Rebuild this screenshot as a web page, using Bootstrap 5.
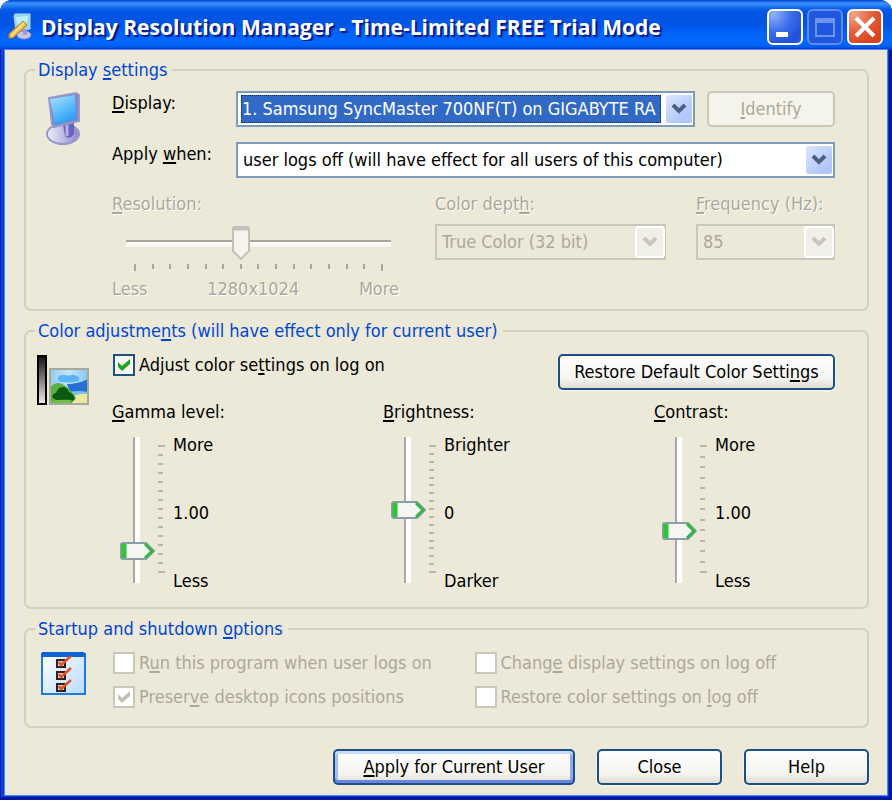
<!DOCTYPE html>
<html lang="en">
<head>
<meta charset="utf-8">
<meta name="viewport" content="width=device-width, initial-scale=1">
<title>Display Resolution Manager</title>
<link href="https://cdn.jsdelivr.net/npm/bootstrap@5.3.0/dist/css/bootstrap.min.css" rel="stylesheet">
<style>
:root { --face:#ece9d8; --off:#aca899; --edge:#7f9db9; }
body { font:18px/24px "DejaVu Sans Condensed","Noto Sans",sans-serif; color:#000; background:#fff; }
u { text-underline-offset:2px; text-decoration-thickness:2px; text-decoration-skip-ink:none; }
.xp-window { background:#0018a0; border-radius:12px 12px 0 0; overflow:hidden; }
.xp-title { height:50px; padding:4px 9px 0 8px; color:#fff;
  background:linear-gradient(#0848c8 0,#0a55dc 1px,#3c92fb 3px,#2c86fa 5px,#0a5ee8 9px,#0054e3 14px,#0055e5 24px,#0262f8 34px,#0268fe 42px,#0260f4 46px,#0148c4 49px,#0140b8 50px); }
.xp-title h1 { font:bold 21px/28px "Open Sans","Noto Sans",sans-serif; text-shadow:2px 2px 1px #0a1883; white-space:nowrap; overflow:hidden; }
.cap { width:36px; height:36px; padding:0; border:2px solid #fff; border-radius:6px; background:radial-gradient(circle at 15% 10%,#8fb0fa,#3a6ceb 45%,#1f50d8 80%,#2a62ee); }
.cap svg { display:block; width:32px; height:32px; }
.cap-off { border-color:#5f8bf0; background:#1d58de; }
.cap-close { background:radial-gradient(circle at 15% 10%,#f2a48c,#e3603c 45%,#d8431a 80%,#d04818); }
.xp-body { background:var(--face); margin:0 5px 5px; padding:8px 18px 10px 19px; box-shadow:0 0 0 1px #4a88f6,0 0 0 2px #0a3ad6,-2px 0 0 2px #0a46e0; }
.grp { border:2px solid #d3d1be; border-radius:7px; padding:9px 32px 0 9px; min-width:0; }
.grp legend { float:none; width:auto; margin:0; padding:0 5px 0 3px; font-size:18px; line-height:24px; color:#0046d5; }
.pic { width:77px; flex:none; }
.pic svg { display:block; }
.lead-label { width:124px; flex:none; }
.combo { height:36px; border:2px solid var(--edge); background:#fff; padding:2px 1px 2px 2px; min-width:0; }
.combo select { appearance:none; -webkit-appearance:none; border:0; background:transparent; font:inherit; color:inherit; padding:0 0 0 3px; min-width:0; line-height:24px; outline:0; opacity:1; border-radius:0; }
.combo .picked { background:#316ac5; color:#fff; margin:0 5px 0 1px; padding:0; border:1px dotted #e8b070; outline:1px dotted #1d2630; outline-offset:-1px; }
.drop { width:26px; flex:none; border-radius:2px; background:linear-gradient(135deg,#dce6fe,#b4c9fa 70%,#aec4f6); display:grid; place-items:center; }
.combo-off { border-color:#c9c7ba; background:var(--face); color:var(--off); }
.combo-off .drop { background:#f1f0e8; box-shadow:0 0 0 2px #fff; }
.xp-btn { --bs-btn-border-radius:5px; font:inherit; height:36px; padding:0 8px; border:2px solid #1c4f85; background:linear-gradient(#fff,#f5f4f0 70%,#dfdcd2); color:#000; white-space:nowrap; box-shadow:0 1px 0 1px #f3f1e6; }
.xp-btn:hover { color:#000; }
.xp-btn.main { box-shadow:inset 0 3px 0 #c6dcfd,inset 0 -3px 0 #6686e0,inset 3px 0 0 #a3bdf4,inset -3px 0 0 #8dabee; }
.xp-btn:disabled { border-color:#c9c7ba; background:#f5f4ea; color:var(--off); opacity:1; box-shadow:none; }
.etched { color:var(--off); text-shadow:1px 1px 0 #fff; }
.w-id { width:128px; } .w-wide { width:277px; } .w-apply { width:242px; } .w-small { width:125px; } .foot { gap:22px; }
.row-gap-a { margin-bottom:15px; } .row-gap-b { margin-bottom:14px; } .row-gap-c { margin-bottom:10px; }
.w-res { flex:287 1 0; } .w-depth { flex:231 1 0; margin:0 30px 0 36px; } .w-freq { flex:139 1 0; min-width:0; }
.over { display:block; margin-bottom:8px; }
.rail { padding:2px 8px 0 14px; }
.xrange { appearance:none; -webkit-appearance:none; display:block; margin:0; background:transparent; }
.xrange-h { width:100%; height:34px; }
.xrange-h::-webkit-slider-runnable-track { height:34px; background:linear-gradient(#a9a79b,#a9a79b) 0 14px/100% 2px no-repeat,linear-gradient(#fff,#f6f5ef) 0 16px/100% 5px no-repeat; }
.xrange-h::-webkit-slider-thumb { -webkit-appearance:none; width:18px; height:34px; background:url("data:image/svg+xml,%3Csvg xmlns='http://www.w3.org/2000/svg' width='18' height='34'%3E%3Cpath d='M1 2Q1 1 3 1H15Q17 1 17 2V25L9 33L1 25Z' fill='%23f4f3ee' stroke='%23c3c1b6' stroke-width='2'/%3E%3Cpath d='M2 3H16' stroke='%23c3c1b6' stroke-width='3'/%3E%3C/svg%3E"); }
.xrange-v { width:36px; height:146px; writing-mode:vertical-lr; direction:rtl; }
.xrange-v::-webkit-slider-runnable-track { width:36px; height:146px; background:linear-gradient(#a8a8a4,#a8a8a4) 13px 0/2px 100% no-repeat,linear-gradient(#fff,#fff) 15px 0/5px 100% no-repeat; }
.xrange-v::-webkit-slider-thumb { -webkit-appearance:none; width:36px; height:18px; background:url("data:image/svg+xml,%3Csvg xmlns='http://www.w3.org/2000/svg' width='36' height='18'%3E%3Cpath d='M3 1H26L34 9L26 17H3Q1 17 1 15V3Q1 1 3 1Z' fill='%23f5f5f1' stroke='%238b9ea8' stroke-width='2'/%3E%3Cpath d='M4 2V16' stroke='%2332c13c' stroke-width='5'/%3E%3Cpath d='M25 2L32 9L25 16' fill='none' stroke='%2334b548' stroke-width='3'/%3E%3C/svg%3E"); }
.tick-col { width:7px; height:128px; margin:8px 8px 0 2px; }
.tick-col i { width:5px; height:2px; background:#b9b6a6; }
.tick-col i:first-child, .tick-col i:last-child { width:7px; }
.tick-row { height:7px; margin:4px 8px 6px; }
.tick-row i { width:2px; height:5px; background:#aca899; }
.tick-row i:first-child, .tick-row i:last-child { height:7px; }
.scale { height:169px; padding-top:9px; }
.w-col { flex:271 1 0; } .w-end { flex:181 1 0; }
.xcheck { min-height:0; margin:0; padding:0; line-height:24px; height:22px; }
.checks { gap:12px; }
.xcheck .form-check-input { float:none; flex:none; margin:0 4px 0 1px; width:22px; height:22px; border:2px solid #1c5180; border-radius:0; background-color:#fff; background-size:18px 18px; }
.xcheck .form-check-input:checked { background-color:#f6f6f2; background-image:url("data:image/svg+xml,%3Csvg xmlns='http://www.w3.org/2000/svg' viewBox='0 0 18 18'%3E%3Cpath d='M3 6L7 10L15 3V8L7 15L3 11Z' fill='%2321a121'/%3E%3C/svg%3E"); }
.xcheck .form-check-input:disabled { border-color:#c9c7ba; opacity:1; background-color:#fff; }
.xcheck .form-check-input:disabled:checked { background-image:url("data:image/svg+xml,%3Csvg xmlns='http://www.w3.org/2000/svg' viewBox='0 0 18 18'%3E%3Cpath d='M3 6L7 10L15 3V8L7 15L3 11Z' fill='%23c3c1b5'/%3E%3C/svg%3E"); }
.xcheck .form-check-input:disabled ~ .form-check-label { color:var(--off); opacity:1; }
.h-one { padding-bottom:8px; } .h-two { padding-top:11px; padding-bottom:14px; } .h-three { padding-top:11px; padding-bottom:18px; }
</style>
<script src="https://cdn.jsdelivr.net/npm/bootstrap@5.3.0/dist/js/bootstrap.bundle.min.js"></script>
</head>
<body>
<main class="xp-window min-vh-100 d-flex flex-column">
  <header class="xp-title d-flex align-items-center">
    <svg class="flex-shrink-0 me-2" width="25" height="28" viewBox="0 0 25 28" aria-hidden="true">
      <path d="M6 3L7 1L22 1L22 16L8 18Z" fill="#8fd8f4" stroke="#c2d4e8"/>
      <path d="M8 4L20 3L19 10L9 12Z" fill="#b9efff"/>
      <ellipse cx="16" cy="22" rx="7" ry="4" fill="#c9c8e4" stroke="#8f8fc4"/>
      <path d="M15 16h4v6h-4z" fill="#9d9dd4"/>
      <path d="M1 21L15 8L19 12L5 25L1 25Z" fill="#f0b848" stroke="#b47a1c"/>
      <path d="M3 23L16 10" stroke="#ffe08c" stroke-width="2"/>
    </svg>
    <h1 class="m-0 flex-grow-1">Display Resolution Manager - Time-Limited FREE Trial Mode</h1>
    <div class="d-flex gap-1 flex-shrink-0">
      <button class="cap" type="button" aria-label="Minimize"><svg viewBox="0 0 32 32"><path d="M7 21h12v5H7z" fill="#fff"/></svg></button>
      <button class="cap cap-off" type="button" aria-label="Maximize" disabled><svg viewBox="0 0 32 32"><path d="M7 9h18v16H7z" fill="none" stroke="#6c93f0" stroke-width="2"/><path d="M6 7h20v5H6z" fill="#6c93f0"/></svg></button>
      <button class="cap cap-close" type="button" aria-label="Close window"><svg viewBox="0 0 32 32"><path d="M7 7L25 25M25 7L7 25" stroke="#fff" stroke-width="4"/></svg></button>
    </div>
  </header>

  <form class="xp-body flex-grow-1 d-flex flex-column gap-2">
    <fieldset class="grp h-one">
      <legend>Display <u>s</u>ettings</legend>
      <div class="d-flex">
        <div class="pic ps-2">
          <svg width="42" height="56" viewBox="0 0 42 56" aria-hidden="true">
            <defs><linearGradient id="scr" x1="0" y1="0" x2="0.500" y2="1"><stop offset="0" stop-color="#a8e8ff"/><stop offset="1" stop-color="#2a9cf4"/></linearGradient>
            <linearGradient id="foot" x1="0" x2="1"><stop offset="0" stop-color="#f0effa"/><stop offset="1" stop-color="#8c88cc"/></linearGradient></defs>
            <ellipse cx="20" cy="43" rx="16" ry="10" fill="url(#foot)" stroke="#9a98c8" stroke-width="2"/>
            <path d="M20 34L31 30V43Q27 49 22 45Z" fill="#6a62c0"/>
            <path d="M24 34v11" stroke="#b4b0e4" stroke-width="3"/>
            <path d="M6 7L33 2L36 4V30L11 36L9 33Z" fill="#7d86cc" stroke="#9a98c8" stroke-width="2"/>
            <path d="M7 8L32 4L33 28L12 34Z" fill="url(#scr)"/>
          </svg>
        </div>
        <div class="flex-grow-1">
          <div class="d-flex row-gap-a">
            <label class="lead-label" for="display"><u>D</u>isplay:</label>
            <div class="combo d-flex flex-grow-1 me-2">
              <select id="display" class="picked flex-grow-1 w-100"><option>1. Samsung SyncMaster 700NF(T) on GIGABYTE RA</option></select>
              <span class="drop"><svg width="16" height="12" viewBox="0 0 16 12"><path d="M2 2L8 8L14 2" fill="none" stroke="#4d6185" stroke-width="4"/></svg></span>
            </div>
            <button class="btn xp-btn w-id flex-shrink-0 ms-1" type="button" disabled><u>I</u>dentify</button>
          </div>
          <div class="d-flex row-gap-b">
            <label class="lead-label" for="when">Apply <u>w</u>hen:</label>
            <div class="combo d-flex flex-grow-1">
              <select id="when" class="flex-grow-1 w-100"><option>user logs off (will have effect for all users of this computer)</option></select>
              <span class="drop"><svg width="16" height="12" viewBox="0 0 16 12"><path d="M2 2L8 8L14 2" fill="none" stroke="#4d6185" stroke-width="4"/></svg></span>
            </div>
          </div>
          <div class="d-flex">
            <div class="w-res">
              <label class="etched over" for="res"><u>R</u>esolution:</label>
              <div class="rail">
                <input id="res" class="xrange xrange-h" type="range" min="0" max="14" value="6" disabled>
                <div class="tick-row d-flex justify-content-between"><i></i><i></i><i></i><i></i><i></i><i></i><i></i><i></i><i></i><i></i><i></i><i></i><i></i><i></i><i></i></div>
              </div>
              <div class="etched d-flex justify-content-between"><span>Less</span><span>1280x1024</span><span>More</span></div>
            </div>
            <div class="w-depth">
              <label class="etched over" for="depth">Color dept<u>h</u>:</label>
              <div class="combo combo-off d-flex">
                <select id="depth" class="flex-grow-1 w-100" disabled><option>True Color (32 bit)</option></select>
                <span class="drop"><svg width="16" height="12" viewBox="0 0 16 12"><path d="M2 2L8 8L14 2" fill="none" stroke="#c9c7ba" stroke-width="4"/></svg></span>
              </div>
            </div>
            <div class="w-freq">
              <label class="etched over text-nowrap" for="freq"><u>F</u>requency (Hz):</label>
              <div class="combo combo-off d-flex">
                <select id="freq" class="flex-grow-1 w-100" disabled><option>85</option></select>
                <span class="drop"><svg width="16" height="12" viewBox="0 0 16 12"><path d="M2 2L8 8L14 2" fill="none" stroke="#c9c7ba" stroke-width="4"/></svg></span>
              </div>
            </div>
          </div>
        </div>
      </div>
    </fieldset>

    <fieldset class="grp h-two">
      <legend>Color adjustme<u>n</u>ts (will have effect only for current user)</legend>
      <div class="d-flex">
        <div class="pic">
          <svg width="56" height="54" viewBox="0 0 56 54" aria-hidden="true">
            <defs><linearGradient id="ramp" x1="0" y1="0" x2="0" y2="1"><stop offset="0" stop-color="#111"/><stop offset="1" stop-color="#eee"/></linearGradient>
            <linearGradient id="sky" x1="0" x2="1"><stop offset="0" stop-color="#8ecbf8"/><stop offset="0.500" stop-color="#c4e6fb"/><stop offset="1" stop-color="#8cc4f0"/></linearGradient>
            <clipPath id="frame"><path d="M16 16h36v34H16z"/></clipPath></defs>
            <path d="M3 2h8v48H3z" fill="url(#ramp)" stroke="#000" stroke-width="2"/>
            <g clip-path="url(#frame)">
              <path d="M15 15h38v36H15z" fill="url(#sky)"/>
              <path d="M23 23q3-3 7-2t6 0t8 2v4q-12 3-21 0z" fill="#5cb4f4"/>
              <path d="M32 30Q44 30 53 25V42H36Z" fill="#2470d4"/>
              <path d="M34 38Q44 36 53 38V42H36Z" fill="#7cc0ec"/>
              <path d="M36 44q6-5 17-4v12H33z" fill="#ece8a0"/>
              <path d="M15 34q5-7 12-4t14 14l-6 7H15z" fill="#58b040"/>
              <path d="M17 43q1-4 4-4q2-6 7-6q4 0 6 5q4 1 6 7q-2 3-10 3t-13-5" fill="#0c5a10"/>
              <path d="M15 47q12-2 22-1l-4 5H15z" fill="#6cc048"/>
            </g>
            <path d="M15 15h38v35H15z" fill="none" stroke="#a9a99a" stroke-width="2"/>
          </svg>
        </div>
        <div class="flex-grow-1">
          <div class="d-flex justify-content-between align-items-start row-gap-c">
            <div class="form-check xcheck d-flex align-items-center">
              <input id="adjust" class="form-check-input" type="checkbox" checked>
              <label class="form-check-label" for="adjust">Adjust color se<u>t</u>tings on log on</label>
            </div>
            <button class="btn xp-btn w-wide" type="button" id="restore">Restore Default Color Setti<u>n</u>gs</button>
          </div>
          <div class="d-flex">
            <div class="w-col">
              <label for="gamma"><u>G</u>amma level:</label>
              <div class="scale d-flex ps-2">
                <div class="pt-1 d-flex"><input id="gamma" class="xrange xrange-v" type="range" min="0" max="100" value="18">
                <div class="tick-col d-flex flex-column justify-content-between"><i></i><i></i><i></i><i></i><i></i><i></i><i></i><i></i><i></i><i></i><i></i><i></i><i></i><i></i><i></i></div></div>
                <div class="d-flex flex-column justify-content-between"><span>More</span><span>1.00</span><span>Less</span></div>
              </div>
            </div>
            <div class="w-col">
              <label for="bright"><u>B</u>rightness:</label>
              <div class="scale d-flex ps-2">
                <div class="pt-1 d-flex"><input id="bright" class="xrange xrange-v" type="range" min="0" max="100" value="50">
                <div class="tick-col d-flex flex-column justify-content-between"><i></i><i></i><i></i><i></i><i></i><i></i><i></i><i></i><i></i><i></i><i></i><i></i><i></i><i></i><i></i><i></i><i></i></div></div>
                <div class="d-flex flex-column justify-content-between"><span>Brighter</span><span>0</span><span>Darker</span></div>
              </div>
            </div>
            <div class="w-end">
              <label for="contrast"><u>C</u>ontrast:</label>
              <div class="scale d-flex ps-2">
                <div class="pt-1 d-flex"><input id="contrast" class="xrange xrange-v" type="range" min="0" max="12" value="4">
                <div class="tick-col d-flex flex-column justify-content-between"><i></i><i></i><i></i><i></i><i></i><i></i><i></i><i></i><i></i><i></i><i></i><i></i><i></i></div></div>
                <div class="d-flex flex-column justify-content-between"><span>More</span><span>1.00</span><span>Less</span></div>
              </div>
            </div>
          </div>
        </div>
      </div>
    </fieldset>

    <fieldset class="grp h-three">
      <legend>Startup and shutdown <u>o</u>ptions</legend>
      <div class="d-flex">
        <div class="pic ps-1">
          <svg width="48" height="46" viewBox="0 0 48 46" aria-hidden="true">
            <defs><linearGradient id="sheet" x1="0" y1="0" x2="1" y2="1"><stop offset="0" stop-color="#fff"/><stop offset="1" stop-color="#b8dcfc"/></linearGradient></defs>
            <path d="M3 2h43v40H3z" fill="url(#sheet)" stroke="#1c7ae0" stroke-width="2"/>
            <path d="M3 0h42l2 4v1H2V4z" fill="#0c64d0"/>
            <g fill="#f8d4cc" stroke="#2c2020" stroke-width="2"><path d="M18 8h8v7h-8zM18 20h8v7h-8zM18 32h8v7h-8z"/></g>
            <g fill="none" stroke="#e0502c" stroke-width="2.500"><path d="M20 10l2 3l10-9M20 22l2 3l10-9M20 34l2 3l10-9"/></g>
          </svg>
        </div>
        <div class="flex-grow-1 d-flex">
          <div class="w-res d-flex flex-column checks">
            <div class="form-check xcheck d-flex align-items-center"><input id="run" class="form-check-input" type="checkbox" disabled><label class="form-check-label" for="run">R<u>u</u>n this program when user logs on</label></div>
            <div class="form-check xcheck d-flex align-items-center"><input id="keep" class="form-check-input" type="checkbox" checked disabled><label class="form-check-label" for="keep">Preser<u>v</u>e desktop icons positions</label></div>
          </div>
          <div class="w-res d-flex flex-column checks">
            <div class="form-check xcheck d-flex align-items-center"><input id="change" class="form-check-input" type="checkbox" disabled><label class="form-check-label" for="change">Chang<u>e</u> display settings on log off</label></div>
            <div class="form-check xcheck d-flex align-items-center"><input id="back" class="form-check-input" type="checkbox" disabled><label class="form-check-label" for="back">Restore color settings on <u>l</u>og off</label></div>
          </div>
        </div>
      </div>
    </fieldset>

    <div class="foot d-flex justify-content-end mt-auto">
      <button class="btn xp-btn main w-apply" type="button"><u>A</u>pply for Current User</button>
      <button class="btn xp-btn w-small" type="button">Close</button>
      <button class="btn xp-btn w-small" type="button">Help</button>
    </div>
  </form>
</main>
</body>
</html>
